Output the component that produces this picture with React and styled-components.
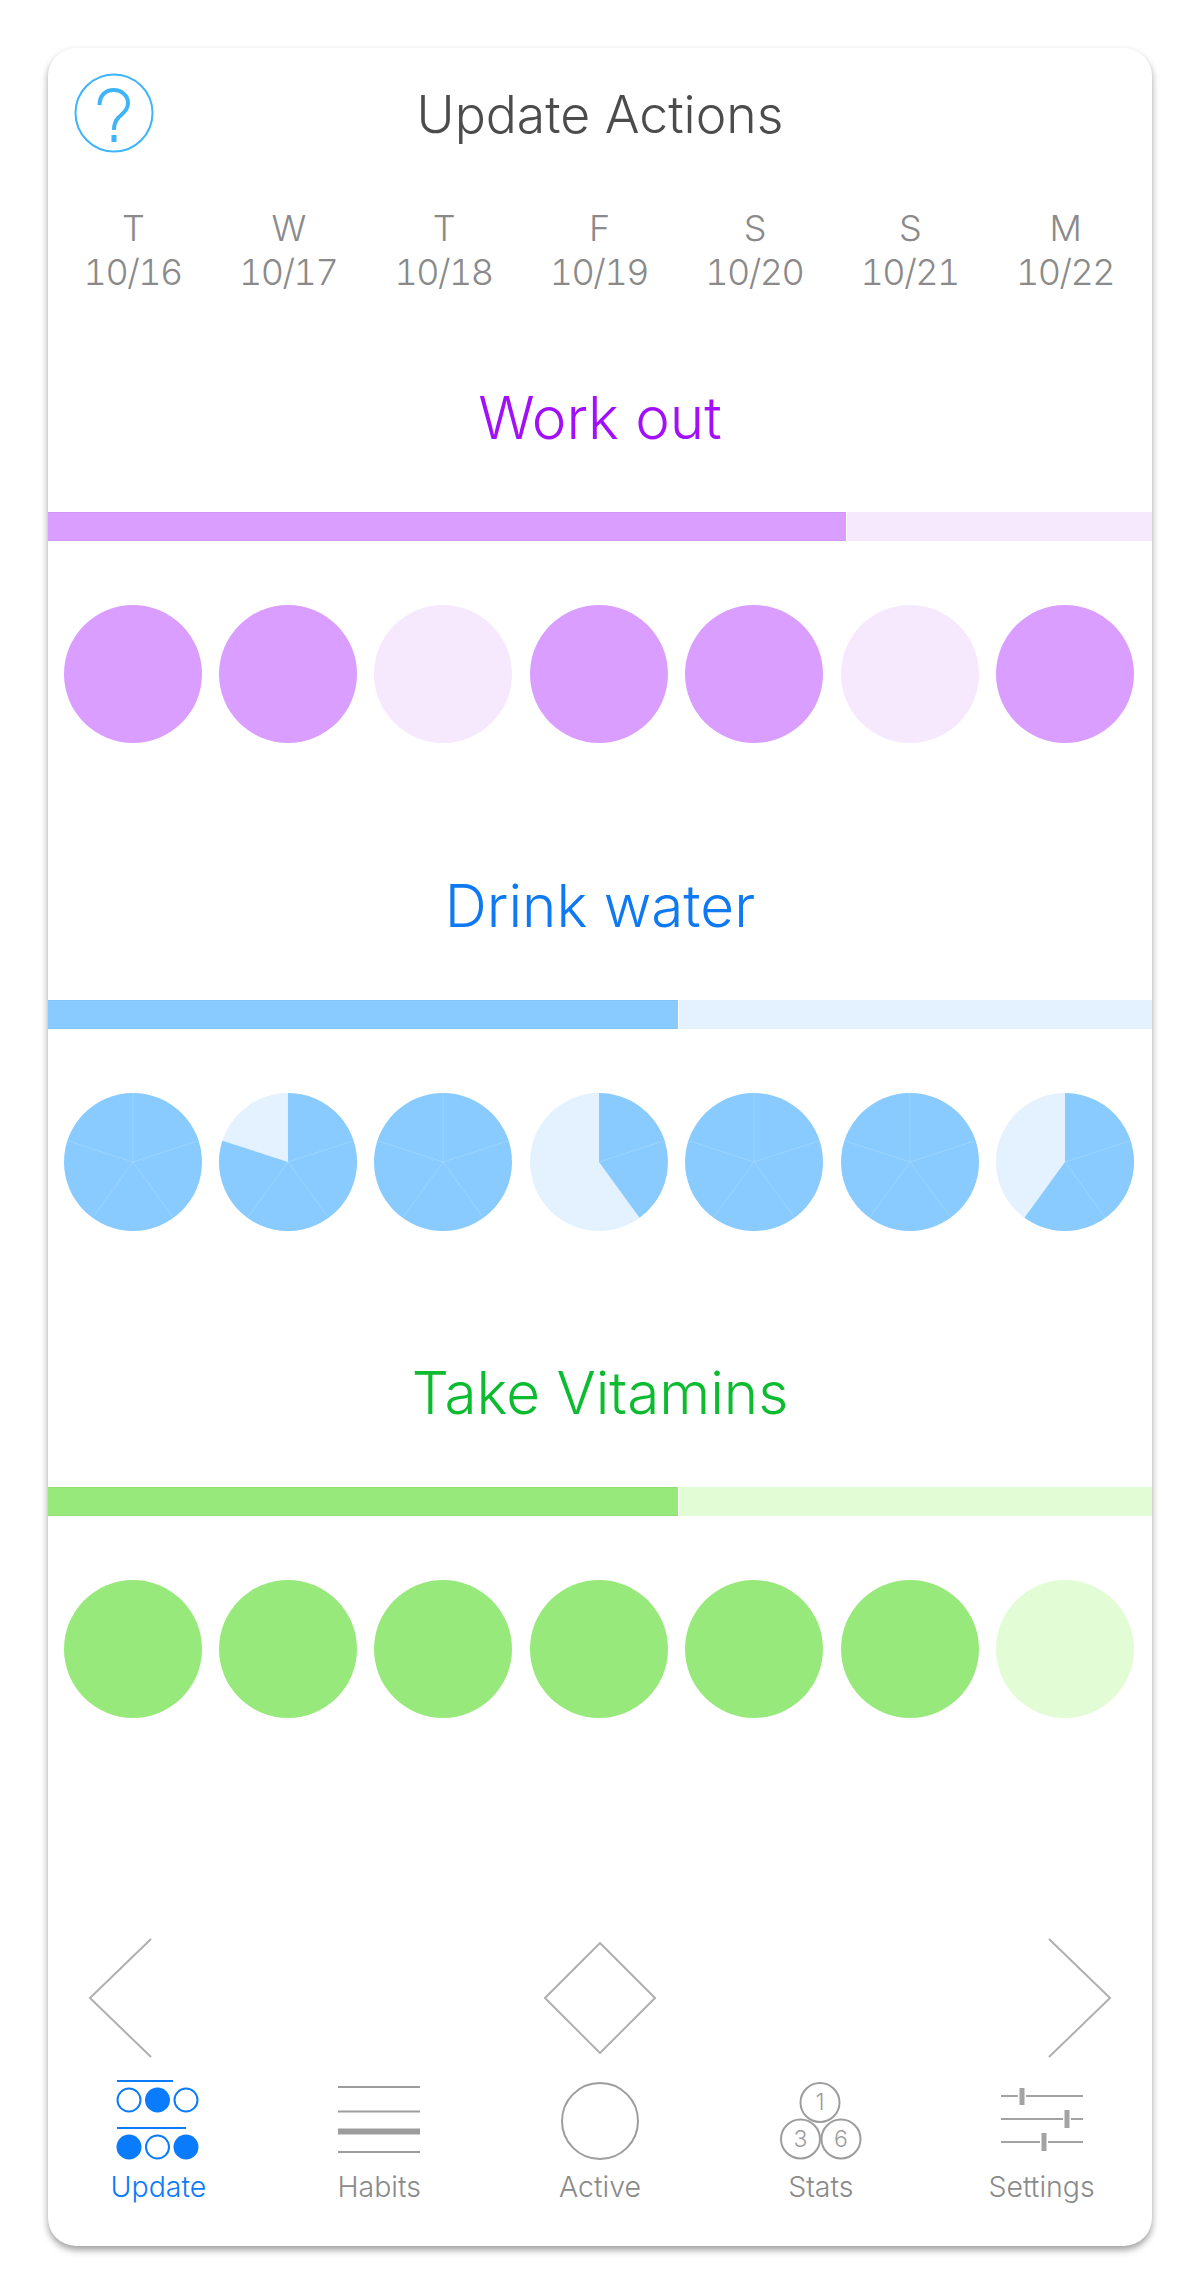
import React from "react"
import styled, { createGlobalStyle } from "styled-components"

const GlobalStyle = createGlobalStyle`
  html, body {
    margin: 0;
    padding: 0;
    background: #ffffff;
  }
`

const days = [
  { day: "T", date: "10/16" },
  { day: "W", date: "10/17" },
  { day: "T", date: "10/18" },
  { day: "F", date: "10/19" },
  { day: "S", date: "10/20" },
  { day: "S", date: "10/21" },
  { day: "M", date: "10/22" },
]

const habits = [
  { name: "Work out", title: "#a210fb", full: "#d99eff", empty: "#f6e9fe", bar: 72.35, values: [5, 5, 0, 5, 5, 0, 5], plain: true },
  { name: "Drink water", title: "#0e79f2", full: "#89cbff", empty: "#e3f2fe", bar: 57.2, values: [5, 4, 5, 2, 5, 5, 3] },
  { name: "Take Vitamins", title: "#0cbb2f", full: "#98e97b", empty: "#e2fcd6", bar: 57.2, values: [5, 5, 5, 5, 5, 5, 0], plain: true },
]

const tabs = ["Update", "Habits", "Active", "Stats", "Settings"]

const point = (i) => {
  const a = (i * 72 - 90) * Math.PI / 180
  return `${69 + 69 * Math.cos(a)} ${69 + 69 * Math.sin(a)}`
}

const Pie = ({ value, full, empty, plain }) => {
  const whole = value === 5
  return (
    <PieSvg viewBox="0 0 138 138">
      <circle cx="69" cy="69" r="69" fill={whole ? full : empty} />
      {!whole && value > 0 && (
        <path d={`M69 69 L${point(0)} A69 69 0 ${value > 2 ? 1 : 0} 1 ${point(value)} Z`} fill={full} />
      )}
      {!plain && [0, 1, 2, 3, 4].filter(i => whole || (i > 0 && i < value)).map(i => (
        <path key={i} d={`M69 69 L${point(i)}`} stroke="#a0d5ff" strokeWidth="0.8" />
      ))}
    </PieSvg>
  )
}

const HelpIcon = () => (
  <svg width="80" height="80" viewBox="0 0 80 80">
    <circle cx="40" cy="40" r="38.5" fill="none" stroke="#3eb4fb" strokeWidth="2" />
    <path d="M25.5 32 C25.500 22 32 17 39.500 17 C47.500 17 54 22.500 54 30 C54 37 49 40 44.500 44.500 C41 48 40 51 40 57" fill="none" stroke="#3eb4fb" strokeWidth="4" />
    <rect x="37.500" y="62" width="5" height="7" fill="#3eb4fb" />
  </svg>
)

const UpdateIcon = () => (
  <svg width="84" height="82" viewBox="0 0 84 82" fill="#0a7bfb" stroke="#0a7bfb">
    <path d="M1 1 H57 M1 48 H70" strokeWidth="2" fill="none" />
    <circle cx="13" cy="20" r="11.500" fill="none" strokeWidth="2" />
    <circle cx="41.500" cy="20" r="12.500" stroke="none" />
    <circle cx="70" cy="20" r="11.500" fill="none" strokeWidth="2" />
    <circle cx="13" cy="67" r="12.500" stroke="none" />
    <circle cx="41.500" cy="67" r="11.500" fill="none" strokeWidth="2" />
    <circle cx="70" cy="67" r="12.500" stroke="none" />
  </svg>
)

const HabitsIcon = () => (
  <svg width="82" height="82" viewBox="0 0 82 82" stroke="#9d9d9d">
    <path d="M0 7 H82 M0 31.500 H82 M0 72 H82" strokeWidth="2" />
    <path d="M0 51.500 H82" strokeWidth="6" />
  </svg>
)

const ActiveIcon = () => (
  <svg width="78" height="78" viewBox="0 0 78 78">
    <circle cx="39" cy="39" r="38" fill="none" stroke="#9d9d9d" strokeWidth="2" />
  </svg>
)

const StatsIcon = () => (
  <svg width="82" height="78" viewBox="0 0 82 78" fill="none" stroke="#9d9d9d" strokeWidth="2">
    <circle cx="40" cy="20.500" r="19.500" />
    <circle cx="20.500" cy="57" r="19.500" />
    <circle cx="61" cy="57" r="19.500" />
    <StatNum x="40" y="28">1</StatNum>
    <StatNum x="20.500" y="64.500">3</StatNum>
    <StatNum x="61" y="64.500">6</StatNum>
  </svg>
)

const SettingsIcon = () => (
  <svg width="82" height="66" viewBox="0 0 82 66" stroke="#a3a3a3">
    <path d="M0 8 H17 M25 8 H82 M0 31 H62 M70 31 H82 M0 54 H39 M47 54 H82" strokeWidth="2" fill="none" />
    <path d="M21 0 V17 M66 22 V40 M43 45 V63" strokeWidth="5" fill="none" />
  </svg>
)

const tabIcons = [UpdateIcon, HabitsIcon, ActiveIcon, StatsIcon, SettingsIcon]

const App = () => (
  <>
    <GlobalStyle />
    <Page>
      <Card>
        <Header>
          <HelpSlot><HelpIcon /></HelpSlot>
          <Title>Update Actions</Title>
        </Header>
        <DayRow>
          {days.map(d => (
            <Day key={d.date}>
              <span>{d.day}</span>
              <span>{d.date}</span>
            </Day>
          ))}
        </DayRow>
        <Habits>
          {habits.map(h => (
            <Habit key={h.name}>
              <HabitName $color={h.title}>{h.name}</HabitName>
              <Bar $color={h.empty}>
                <BarFill $color={h.full} style={{ width: `${h.bar}%` }} />
              </Bar>
              <PieRow>
                {h.values.map((v, i) => (
                  <PieCell key={i}>
                    <Pie value={v} full={h.full} empty={h.empty} plain={h.plain} />
                  </PieCell>
                ))}
              </PieRow>
            </Habit>
          ))}
        </Habits>
        <Arrows>
          <svg width="64" height="120" viewBox="0 0 64 120">
            <path d="M63 1 L2 60 L63 119" fill="none" stroke="#b0b0b0" strokeWidth="2" />
          </svg>
          <svg width="112" height="112" viewBox="0 0 112 112">
            <path d="M56 1 L111 56 L56 111 L1 56 Z" fill="none" stroke="#b0b0b0" strokeWidth="2" />
          </svg>
          <svg width="64" height="120" viewBox="0 0 64 120">
            <path d="M1 1 L62 60 L1 119" fill="none" stroke="#b0b0b0" strokeWidth="2" />
          </svg>
        </Arrows>
        <TabBar>
          {tabs.map((t, i) => {
            const Icon = tabIcons[i]
            return (
              <Tab key={t} $active={i === 0}>
                <TabIcon><Icon /></TabIcon>
                <TabLabel>{t}</TabLabel>
              </Tab>
            )
          })}
        </TabBar>
      </Card>
    </Page>
  </>
)

export default App

const Page = styled.div`
  width: 1200px;
  height: 2296px;
  padding: 48px;
  box-sizing: border-box;
  background: #ffffff;
  font-family: "Inter", "Liberation Sans", sans-serif;
  font-weight: 280;
`
const Card = styled.div`
  width: 1104px;
  height: 2198px;
  background: #ffffff;
  border-radius: 28px;
  box-shadow: 0 4px 7px rgba(0, 0, 0, 0.38);
  display: flex;
  flex-direction: column;
`
const Header = styled.header`
  height: 118px;
  display: flex;
  align-items: center;
  justify-content: center;
  position: relative;
  padding-top: 14px;
  box-sizing: border-box;
`
const HelpSlot = styled.div`
  position: absolute;
  left: 26px;
  top: 25px;
  line-height: 0;
`
const Title = styled.h1`
  margin: 0;
  font-size: 51.700px;
  font-weight: 280;
  color: #4c4c4c;
`
const DayRow = styled.div`
  display: grid;
  grid-template-columns: repeat(7, 155.4px);
  padding: 0 7px;
  margin-top: 40px;
`
const Day = styled.div`
  display: flex;
  flex-direction: column;
  align-items: center;
  color: #8a8a8a;
  font-size: 36px;
  line-height: 44px;
  font-variant-numeric: tabular-nums;
  letter-spacing: -1.5px;
`
const Habits = styled.div`
  display: flex;
  flex-direction: column;
  margin-top: 88px;
`
const Habit = styled.section`
  height: 487.700px;
  display: flex;
  flex-direction: column;
`
const HabitName = styled.h2`
  margin: 0;
  height: 130px;
  font-size: 58.400px;
  line-height: 72px;
  font-weight: 280;
  text-align: center;
  color: ${p => p.$color};
`
const Bar = styled.div`
  height: 29px;
  flex-shrink: 0;
  background: ${p => p.$color};
`
const BarFill = styled.div`
  height: 100%;
  box-sizing: border-box;
  border-right: 1px solid #ffffff;
  background: ${p => p.$color};
  box-shadow: inset 0 1px 0 rgba(0, 0, 0, 0.04), inset 0 -1px 0 rgba(0, 0, 0, 0.04);
`
const PieRow = styled.div`
  display: grid;
  grid-template-columns: repeat(7, 155.4px);
  padding: 0 7px;
  margin-top: 64px;
`
const PieCell = styled.div`
  display: flex;
  justify-content: center;
`
const PieSvg = styled.svg`
  width: 138px;
  height: 138px;
`
const StatNum = styled.text`
  font-family: "Inter", "Liberation Sans", sans-serif;
  font-size: 23px;
  font-weight: 280;
  text-anchor: middle;
  fill: #9d9d9d;
  stroke: none;
`
const Arrows = styled.div`
  margin-top: auto;
  display: flex;
  align-items: center;
  justify-content: space-between;
  padding: 0 40px;
  height: 120px;
`
const TabBar = styled.nav`
  display: grid;
  grid-template-columns: repeat(5, 1fr);
  height: 188px;
  padding-top: 21px;
  box-sizing: border-box;
`
const Tab = styled.div`
  display: flex;
  flex-direction: column;
  align-items: center;
  color: ${p => (p.$active ? "#0a7bfb" : "#8a8a8a")};
`
const TabIcon = styled.div`
  height: 84px;
  display: flex;
  align-items: center;
  justify-content: center;
`
const TabLabel = styled.span`
  font-size: 28.500px;
  line-height: 36px;
  margin-top: 6px;
`
